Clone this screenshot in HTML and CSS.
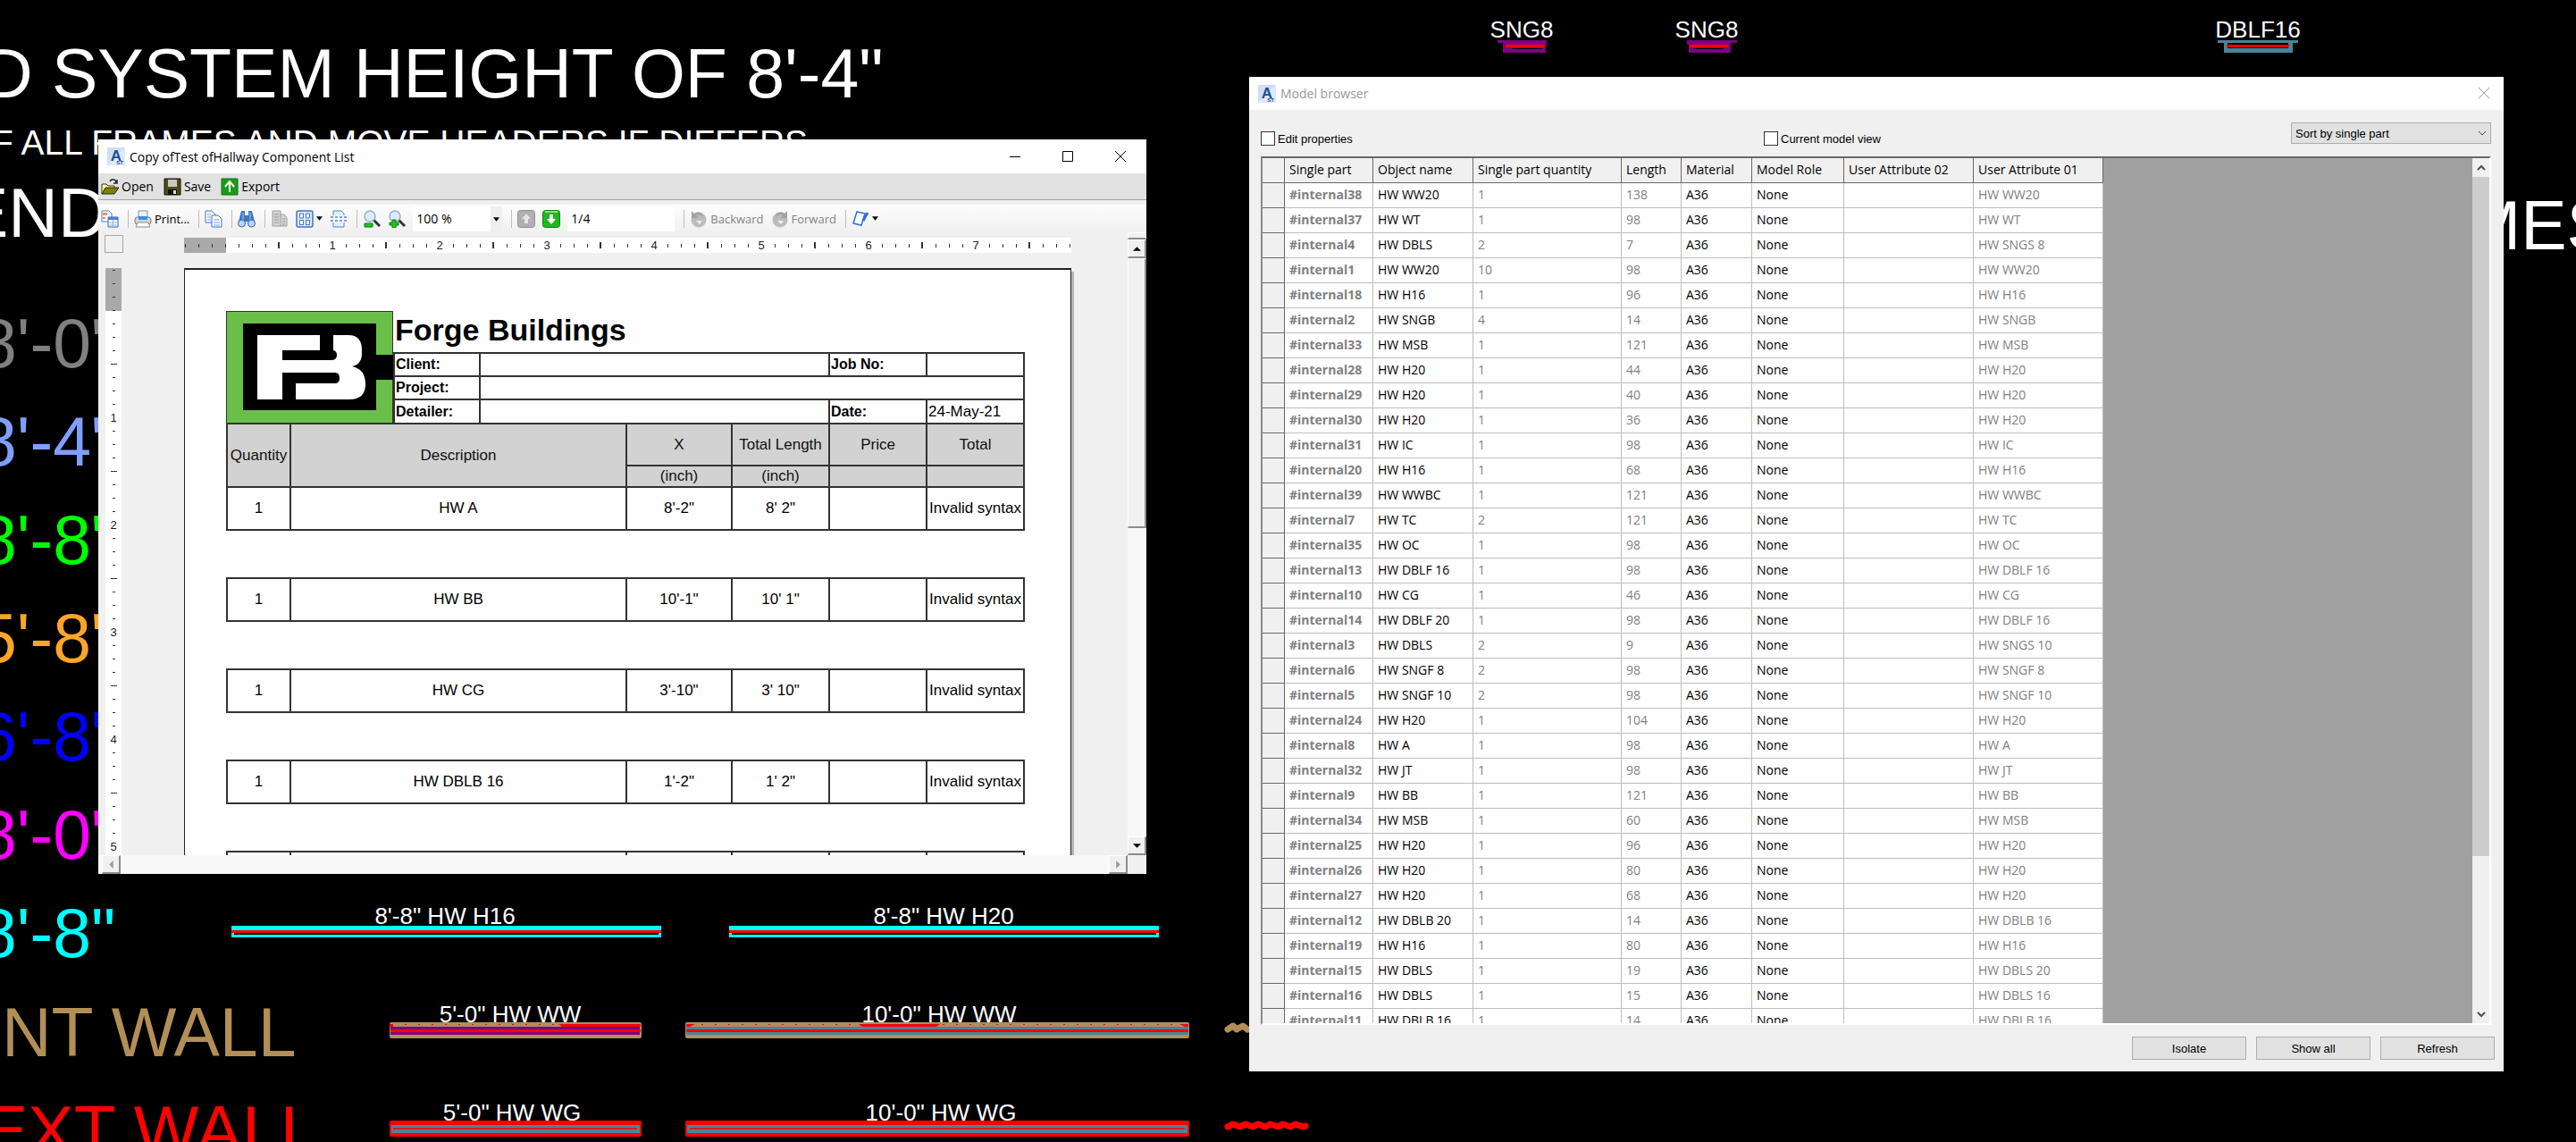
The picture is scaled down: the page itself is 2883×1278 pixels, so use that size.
FILE: index.html
```html
<!DOCTYPE html>
<html lang="en">
<head>
  <meta charset="UTF-8">
  <title>Hallway Component List</title>
  <link rel="stylesheet" href="styles.css">
</head>
<body>
  <!-- CAD drawing behind the windows -->
  <svg class="drawing" aria-label="Drawing">
    <g class="note">
      <text x="-19" y="109" fill="#fff">D SYSTEM HEIGHT OF 8'-4"</text>
      <text x="-42" y="265" fill="#fff">ENDS</text>
      <text x="2757" y="279" fill="#fff">MES</text>
      <text x="-24" y="411" fill="#808080">8'-0"</text>
      <text x="-24" y="521" fill="#7f9fff">8'-4"</text>
      <text x="-24" y="631" fill="#0f0">8'-8"</text>
      <text x="-24" y="741" fill="#ffa528">5'-8"</text>
      <text x="-24" y="851" fill="#00f">6'-8"</text>
      <text x="-24" y="961" fill="#f0f">8'-0"</text>
      <text x="-24" y="1071" fill="#0ff">8'-8"</text>
      <text x="2" y="1182" fill="#b18f57">NT WALL</text>
      <text x="-20" y="1292" fill="#f00">EXT WALL</text>
    </g>
    <text class="subnote" x="-9" y="173">F ALL FRAMES AND MOVE HEADERS IF DIFFERS</text>

    <g class="tag">
      <text x="1703" y="42">SNG8</text>
      <text x="1910" y="42">SNG8</text>
      <text x="2527" y="42">DBLF16</text>
      <text x="498" y="1034">8'-8" HW H16</text>
      <text x="1056" y="1034">8'-8" HW H20</text>
      <text x="571" y="1144">5'-0" HW WW</text>
      <text x="1051" y="1144">10'-0" HW WW</text>
      <text x="573" y="1254">5'-0" HW WG</text>
      <text x="1053" y="1254">10'-0" HW WG</text>
    </g>

    <!-- single headers -->
    <g fill="#800080">
      <path d="M1676 45h55v5h-1v9h-48v-11h-6z"/>
      <path d="M1888 45h56v3h-7v10h-1v1h-46v-9h-2z"/>
    </g>
    <path d="M1692 54h34v1h-34zM1895 54h34v1h-34z" fill="#000"/>
    <path d="M1685 50h44v3h-44zM1891 50h43v3h-43z" fill="#f00"/>
    <path d="M2482 45h90v3h-6v11h-77v-11h-7z" fill="#4a8499"/>
    <path d="M2493 48h68v6h-68z" fill="#000"/>
    <path d="M2492 50h70v3h-70z" fill="#f00"/>

    <!-- headers H16 and H20 -->
    <g id="header">
      <rect x="259" y="1036" width="481" height="13" fill="#0ff"/>
      <rect x="262" y="1041" width="475" height="5" fill="#000"/>
      <rect x="259" y="1041" width="481" height="3" fill="#f00"/>
    </g>
    <use href="#header" x="557"/>

    <!-- window wall frames -->
    <rect x="436" y="1144" width="282" height="18" rx="2" fill="#b18f57"/>
    <path d="M438 1146.500h278" stroke="#f00" stroke-dasharray="2 13"/>
    <path d="M625 1146h92v3h-88zM436 1146h4v3h-4z" fill="#f00"/>
    <rect x="437" y="1149" width="279" height="9" fill="#800080"/>
    <rect x="437" y="1152" width="280" height="3" fill="#f00"/>
    <rect x="767" y="1144" width="564" height="18" rx="2" fill="#b18f57"/>
    <path d="M770 1146.500h558" stroke="#f00" stroke-dasharray="2 13"/>
    <path d="M961 1146h91l-4 3h-83zM768 1146h10l-6 3h-4zM1320 1146h10v3h-4z" fill="#f00"/>
    <rect x="768" y="1149" width="562" height="9" fill="#4a8499"/>
    <rect x="768" y="1152" width="562" height="3" fill="#f00"/>
    <path d="M1374 1152l6-4 4 4 7-4 5 4" class="weld" stroke="#b18f57"/>

    <!-- window glazed frames -->
    <rect x="436" y="1254" width="282" height="18" rx="2" fill="#f00"/>
    <rect x="438" y="1259" width="278" height="9" fill="#4a8499"/>
    <rect x="440" y="1262" width="273" height="2" fill="#d81e24"/>
    <rect x="767" y="1254" width="564" height="18" rx="2" fill="#f00"/>
    <rect x="769" y="1259" width="560" height="9" fill="#4a8499"/>
    <rect x="772" y="1262" width="554" height="2" fill="#d81e24"/>
    <path d="M1374 1261l6-3 8 3 6-3 8 3 6-3 8 3 6-3 8 3 6-3 8 3 6-3 8 3 3-1" class="weld" stroke="#f00"/>
  </svg>

  <svg class="symbols">
    <symbol id="app" viewBox="0 0 20 20">
      <rect width="20" height="20" fill="#cfdff3"/>
      <path d="M0 20L20 0v20z" fill="#dfe9f7"/>
      <text x="10" y="15" text-anchor="middle" class="app-a">A</text>
      <text x="14" y="19" text-anchor="middle" class="app-st">ST</text>
    </symbol>
  </svg>

  <!-- report window -->
  <section class="window report-window">
    <header class="title-bar">
      <svg class="icon"><use href="#app"/></svg>
      <h1>Copy ofTest ofHallway Component List</h1>
      <button type="button" class="win-btn" aria-label="Minimize"><svg viewBox="0 0 12 12"><path d="M0 6.500h12"/></svg></button>
      <button type="button" class="win-btn" aria-label="Maximize"><svg viewBox="0 0 12 12"><path d="M.5.5h11v11H.5z"/></svg></button>
      <button type="button" class="win-btn" aria-label="Close"><svg viewBox="0 0 12 12"><path d="M0 0l12 12M12 0L0 12"/></svg></button>
    </header>

    <nav class="menu-bar">
      <button type="button"><svg class="icon" viewBox="0 0 20 20"><path d="M1 18V7h5l2 2h7v3" fill="#ffff80" stroke="#333"/><path d="M1 18l4-7h15l-5 7z" fill="#808000" stroke="#222"/><path d="M10 4c2-3 6-3 7 1m1-3v4h-4" fill="none" stroke="#222" stroke-width="1.500"/></svg>Open</button>
      <button type="button"><svg class="icon" viewBox="0 0 20 20"><path d="M1 1h18v18H1z" fill="#4d4d10" stroke="#111"/><path d="M5 2h10v8H5z" fill="#c8c8c8"/><path d="M5 13h10v6H5z" fill="#111"/><path d="M11 14h3v4h-3z" fill="#ddd"/></svg>Save</button>
      <button type="button"><svg class="icon" viewBox="0 0 20 20"><path d="M1 1h18v18H1z" fill="#1c9a1c" stroke="#0c6e12"/><path d="M10 16V5M5 10l5-6 5 6" fill="none" stroke="#fff" stroke-width="2"/></svg>Export</button>
    </nav>

    <div class="tool-bar">
      <div class="group">
        <button type="button" aria-label="Layout"><svg class="icon" viewBox="0 0 20 20"><path d="M1 1h8l3 3v9H1z" fill="#fff" stroke="#4a7ed0"/><path d="M2 3h5v3H2zM2 8h3v2H2z" fill="#f08a5a"/><path d="M8 8h11v11H8z" fill="#fff" stroke="#2f66c0"/><path d="M8 8h11v3H8z" fill="#4b7fd6"/><path d="M13.500 11v8M9 14h9M9 17h9" stroke="#8fb0e4"/></svg></button>
      </div>
      <div class="group">
        <button type="button"><svg class="icon" viewBox="0 0 20 20"><path d="M5 1h10v9H5z" fill="#eaf3fc" stroke="#7d93ad"/><rect x="1" y="8" width="18" height="8" rx="3" fill="#d4d8dd" stroke="#777"/><path d="M5 7h10v4H5z" fill="#3d8ee8"/><path d="M4 14h12l2 5H2z" fill="#fff" stroke="#888"/></svg>Print...</button>
      </div>
      <div class="group">
        <button type="button" aria-label="Copy"><svg class="icon" viewBox="0 0 20 20"><g fill="#fff" stroke="#3d74cf"><path d="M1 1h7l4 4v9H1z"/><path d="M8 6h7l4 4v9H8z"/></g><path d="M3 5h4M3 8h4M3 11h4M10 11h6M10 14h7M10 17h7" stroke="#6f9ae0"/></svg></button>
      </div>
      <div class="group">
        <button type="button" aria-label="Find"><svg class="icon" viewBox="0 0 20 20"><path d="M4 1h4v5h4V1h4l3 12H1z" fill="#3f76c4"/><path d="M6 3v9M14 3v9" stroke="#a9c8f4"/><circle cx="4.500" cy="15" r="4" fill="#b9d4f8" stroke="#2f66b8"/><circle cx="15.500" cy="15" r="4" fill="#b9d4f8" stroke="#2f66b8"/></svg></button>
      </div>
      <div class="group">
        <button type="button" disabled aria-label="Single page"><svg class="icon" viewBox="0 0 20 20"><path d="M2 1h9v17H2zM11 5h4l3 4v9h-7" fill="#d2d2d2" stroke="#a0a0a0"/><path d="M4 5h5M4 8h5M4 11h5M4 14h5M13 10h3M13 13h3M13 16h3" stroke="#999"/></svg></button>
        <button type="button" class="drop" aria-label="Multiple pages"><svg class="icon" viewBox="0 0 20 20"><rect x="1" y="1" width="18" height="18" rx="2" fill="#dce8fb" stroke="#3d74cf" stroke-width="1.500"/><path d="M4.500 4h4v5h-4zM11.500 4h4v5h-4zM4.500 11.500h4v5h-4zM11.500 11.500h4v5h-4z" fill="#fff" stroke="#3d74cf"/></svg><svg class="caret" viewBox="0 0 6 6"><path d="M0 1h6L3 5z"/></svg></button>
        <button type="button" aria-label="Continuous"><svg class="icon" viewBox="0 0 20 20"><g fill="#e4eefc" stroke="#4f83d8"><path d="M4 6V1h9l3 3v2"/><path d="M4 14v5h12v-5"/><path d="M1 8h18M1 12h18" stroke-width="1.500" stroke-dasharray="3 2"/></g></svg></button>
      </div>
      <div class="group">
        <button type="button" aria-label="Zoom out"><svg class="icon" viewBox="0 0 20 20"><path d="M12 11l7 7" stroke="#333" stroke-width="3"/><circle cx="8" cy="7" r="6" fill="#d9ecfb" stroke="#9aafc2" stroke-width="1.500"/><path d="M2 15h9v4H2z" fill="#21c321" stroke="#0a7a0a"/></svg></button>
        <button type="button" aria-label="Zoom in"><svg class="icon" viewBox="0 0 20 20"><path d="M12 11l7 7" stroke="#333" stroke-width="3"/><circle cx="8" cy="7" r="6" fill="#d9ecfb" stroke="#9aafc2" stroke-width="1.500"/><path d="M5 11h4v3h3v3H9v3H5v-3H2v-3h3z" fill="#21c321" stroke="#0a7a0a"/></svg></button>
        <div class="zoom-box">
          <select aria-label="Zoom"><option>100 %</option></select>
          <svg class="caret" viewBox="0 0 6 6"><path d="M0 1h6L3 5z"/></svg>
        </div>
      </div>
      <div class="group">
        <button type="button" disabled aria-label="Previous page"><svg class="icon" viewBox="0 0 20 20"><rect x=".5" y=".5" width="19" height="19" rx="3" fill="#b0b0b0" stroke="#909090"/><path d="M10 4l5 6h-3v5H8v-5H5z" fill="#e4e4e4"/></svg></button>
        <button type="button" aria-label="Next page"><svg class="icon" viewBox="0 0 20 20"><rect x=".5" y=".5" width="19" height="19" rx="3" fill="#1fb81f" stroke="#128012"/><path d="M3 2h14" stroke="#7be87b" stroke-width="2"/><path d="M10 16l5-6h-3V5H8v5H5z" fill="#fff"/></svg></button>
        <input class="page-box" type="text" value="1/4" aria-label="Page">
      </div>
      <div class="group">
        <button type="button" disabled><svg class="icon" viewBox="0 0 20 20"><circle cx="10" cy="11" r="8.500" fill="#bcbcbc"/><path d="M2 1v8h8L7 6c3-2 7 0 8 3 0-6-6-8-10-5z" fill="#a2a2a2"/><path d="M7 12h7l-3 4z" fill="#eee"/></svg>Backward</button>
        <button type="button" disabled><svg class="icon" viewBox="0 0 20 20"><circle cx="10" cy="11" r="8.500" fill="#bcbcbc"/><path d="M18 1v8h-8l3-3c-3-2-7 0-8 3 0-6 6-8 10-5z" fill="#a2a2a2"/><path d="M7 12h7l-3 4z" fill="#eee"/></svg>Forward</button>
      </div>
      <div class="group">
        <button type="button" class="drop" aria-label="Edit page"><svg class="icon" viewBox="0 0 20 20"><path d="M6 2l9 2-4 13-9-2z" fill="#fff" stroke="#2f6fd6" stroke-width="1.500"/><path d="M18 3l-5 9" stroke="#2f6fd6" stroke-width="3"/></svg><svg class="caret" viewBox="0 0 6 6"><path d="M0 1h6L3 5z"/></svg></button>
      </div>
    </div>

    <div class="preview">
      <div class="corner"><span></span></div>
      <ol class="ruler ruler-x"><li>1</li><li>2</li><li>3</li><li>4</li><li>5</li><li>6</li><li>7</li></ol>
      <ol class="ruler ruler-y"><li>1</li><li>2</li><li>3</li><li>4</li><li>5</li></ol>

      <div class="paper-area">
        <article class="paper">
          <div class="letterhead">
            <svg class="logo" viewBox="0 0 187 125" role="img" aria-label="Forge Buildings">
              <path d="M0 0h187v125H0z" fill="#6abf4b"/>
              <path d="M19 14h149v35h19v28h-19v34H19z" fill="#000"/>
              <path d="M35 27h70v17H63v11h55q6 0 6-6 0-4-4-5V27h17q15 0 15 17v3q0 13-11 15 15 3 15 20 0 17-18 17H78V81h44q5 0 5-6t-5-6H63v30H35z" fill="#fff"/>
              <path d="M.5.5h186v48M186.500 77v48M.5 0v125" fill="none" stroke="#333"/>
            </svg>
            <div class="job">
              <h2>Forge Buildings</h2>
              <table class="job-table">
                <colgroup><col class="w-label"><col><col class="w-num"><col class="w-num"></colgroup>
                <tr><th>Client:</th><td></td><th>Job No:</th><td></td></tr>
                <tr><th>Project:</th><td colspan="3"></td></tr>
                <tr><th>Detailer:</th><td></td><th>Date:</th><td>24-May-21</td></tr>
              </table>
            </div>
          </div>
          <table class="parts">
            <colgroup><col class="w-qty"><col><col class="w-x"><col class="w-num"><col class="w-num"><col class="w-num"></colgroup>
            <thead>
              <tr class="head-top"><th rowspan="2">Quantity</th><th rowspan="2">Description</th><th>X</th><th>Total Length</th><th>Price</th><th>Total</th></tr>
              <tr class="head-unit"><th>(inch)</th><th>(inch)</th><th></th><th></th></tr>
            </thead>
            <tbody>
              <tr><td>1</td><td>HW A</td><td>8'-2"</td><td>8' 2"</td><td></td><td>Invalid syntax</td></tr>
              <tr class="space"><td colspan="6"></td></tr>
              <tr><td>1</td><td>HW BB</td><td>10'-1"</td><td>10' 1"</td><td></td><td>Invalid syntax</td></tr>
              <tr class="space"><td colspan="6"></td></tr>
              <tr><td>1</td><td>HW CG</td><td>3'-10"</td><td>3' 10"</td><td></td><td>Invalid syntax</td></tr>
              <tr class="space"><td colspan="6"></td></tr>
              <tr><td>1</td><td>HW DBLB 16</td><td>1'-2"</td><td>1' 2"</td><td></td><td>Invalid syntax</td></tr>
              <tr class="space"><td colspan="6"></td></tr>
              <tr><td></td><td></td><td></td><td></td><td></td><td></td></tr>
            </tbody>
          </table>
        </article>
      </div>

      <div class="scroll-y">
        <div class="splitter"></div>
        <button type="button" aria-label="Scroll up"><svg viewBox="0 0 8 8"><path d="M0 6h8L4 2z"/></svg></button>
        <div class="thumb"></div>
        <button type="button" class="last" aria-label="Scroll down"><svg viewBox="0 0 8 8"><path d="M0 2h8L4 6z"/></svg></button>
      </div>
      <div class="scroll-x">
        <button type="button" disabled aria-label="Scroll left"><svg viewBox="0 0 8 8"><path d="M6 0v8L2 4z"/></svg></button>
        <button type="button" disabled aria-label="Scroll right"><svg viewBox="0 0 8 8"><path d="M2 0v8l4-4z"/></svg></button>
      </div>
    </div>
  </section>

  <!-- model browser window -->
  <section class="window browser-window">
    <header class="title-bar inactive">
      <svg class="icon"><use href="#app"/></svg>
      <h1>Model browser</h1>
      <button type="button" class="win-btn" aria-label="Close"><svg viewBox="0 0 12 12"><path d="M0 0l12 12M12 0L0 12"/></svg></button>
    </header>
    <div class="options">
      <label><input type="checkbox">Edit properties</label>
      <label><input type="checkbox">Current model view</label>
      <div class="sort-box">
        <select aria-label="Sort"><option>Sort by single part</option></select>
        <svg viewBox="0 0 10 6"><path d="M1 1l4 4 4-4"/></svg>
      </div>
    </div>
    <div class="grid-box">
      <div class="grid-view">
        <table class="model-grid">
          <colgroup><col class="c-mark"><col class="c-part"><col class="c-name"><col class="c-qty"><col class="c-len"><col class="c-mat"><col class="c-role"><col class="c-attr"><col class="c-attr"></colgroup>
          <thead>
            <tr><th></th><th>Single part</th><th>Object name</th><th>Single part quantity</th><th>Length</th><th>Material</th><th>Model Role</th><th>User Attribute 02</th><th>User Attribute 01</th></tr>
          </thead>
          <tbody id="modelRows"></tbody>
        </table>
      </div>
      <div class="grid-scroll">
        <button type="button" aria-label="Scroll up"><svg viewBox="0 0 10 8"><path d="M1 6l4-4 4 4"/></svg></button>
        <div class="thumb"></div>
        <button type="button" aria-label="Scroll down"><svg viewBox="0 0 10 8"><path d="M1 2l4 4 4-4"/></svg></button>
      </div>
    </div>
    <footer class="actions">
      <button type="button">Isolate</button>
      <button type="button">Show all</button>
      <button type="button">Refresh</button>
    </footer>
  </section>

  <script>
    // part no., object name, quantity, length, user attribute 01
    const parts = [
      [38, 'HW WW20', 1, 138, 'HW WW20'],
      [37, 'HW WT', 1, 98, 'HW WT'],
      [4, 'HW DBLS', 2, 7, 'HW SNGS 8'],
      [1, 'HW WW20', 10, 98, 'HW WW20'],
      [18, 'HW H16', 1, 96, 'HW H16'],
      [2, 'HW SNGB', 4, 14, 'HW SNGB'],
      [33, 'HW MSB', 1, 121, 'HW MSB'],
      [28, 'HW H20', 1, 44, 'HW H20'],
      [29, 'HW H20', 1, 40, 'HW H20'],
      [30, 'HW H20', 1, 36, 'HW H20'],
      [31, 'HW IC', 1, 98, 'HW IC'],
      [20, 'HW H16', 1, 68, 'HW H16'],
      [39, 'HW WWBC', 1, 121, 'HW WWBC'],
      [7, 'HW TC', 2, 121, 'HW TC'],
      [35, 'HW OC', 1, 98, 'HW OC'],
      [13, 'HW DBLF 16', 1, 98, 'HW DBLF 16'],
      [10, 'HW CG', 1, 46, 'HW CG'],
      [14, 'HW DBLF 20', 1, 98, 'HW DBLF 16'],
      [3, 'HW DBLS', 2, 9, 'HW SNGS 10'],
      [6, 'HW SNGF 8', 2, 98, 'HW SNGF 8'],
      [5, 'HW SNGF 10', 2, 98, 'HW SNGF 10'],
      [24, 'HW H20', 1, 104, 'HW H20'],
      [8, 'HW A', 1, 98, 'HW A'],
      [32, 'HW JT', 1, 98, 'HW JT'],
      [9, 'HW BB', 1, 121, 'HW BB'],
      [34, 'HW MSB', 1, 60, 'HW MSB'],
      [25, 'HW H20', 1, 96, 'HW H20'],
      [26, 'HW H20', 1, 80, 'HW H20'],
      [27, 'HW H20', 1, 68, 'HW H20'],
      [12, 'HW DBLB 20', 1, 14, 'HW DBLB 16'],
      [19, 'HW H16', 1, 80, 'HW H16'],
      [15, 'HW DBLS', 1, 19, 'HW DBLS 20'],
      [16, 'HW DBLS', 1, 15, 'HW DBLS 16'],
      [11, 'HW DBLB 16', 1, 14, 'HW DBLB 16']
    ];

    const modelRows = document.getElementById('modelRows');
    parts.forEach(function(p) {
      const cells = ['', '#internal' + p[0], p[1], p[2], p[3], 'A36', 'None', '', p[4]];
      const row = modelRows.insertRow();
      cells.forEach(function(text) {
        row.insertCell().textContent = text;
      });
    });
  </script>
</body>
</html>
```

FILE: styles.css
```css
* {
  box-sizing: border-box;
}
body {
  margin: 0;
  height: 100vh;
  position: relative;
  overflow: hidden;
  background: #000;
  font-family: "Open Sans", "Noto Sans", sans-serif;
  font-size: 14px;
  color: #000;
}
button,
input,
select {
  font: inherit;
  color: inherit;
  margin: 0;
  padding: 0;
}
button {
  border: 0;
  background: none;
}
h1,
h2,
ol {
  margin: 0;
  padding: 0;
  font-weight: normal;
}

/* drawing */
.drawing {
  position: absolute;
  inset: 0;
  width: 100%;
  height: 100%;
  font-family: "Liberation Sans", Arial, sans-serif;
}
.note {
  font-size: 77px;
}
.subnote {
  font-size: 39px;
  fill: #fff;
}
.tag {
  font-size: 26px;
  fill: #fff;
  text-anchor: middle;
}
.weld {
  fill: none;
  stroke-width: 7px;
  stroke-linecap: round;
  stroke-linejoin: round;
}
.symbols {
  position: absolute;
  width: 0;
  height: 0;
}
.app-a {
  font: bold 17px "Liberation Sans", sans-serif;
  fill: #1b4f93;
}
.app-st {
  font: bold 6px "Liberation Sans", sans-serif;
  fill: #1b4f93;
}

/* windows */
.window {
  position: absolute;
  display: flex;
  flex-direction: column;
  background: #f0f0f0;
}
.report-window {
  left: 110px;
  top: 156px;
  right: 1600px;
  bottom: 300px;
}
.browser-window {
  left: 1398px;
  top: 86px;
  right: 81px;
  bottom: 79px;
}
.icon {
  width: 20px;
  height: 20px;
  flex: none;
}
.title-bar {
  display: flex;
  align-items: center;
  height: 38px;
  flex: none;
  padding-left: 10px;
  background: #fff;
}
.title-bar h1 {
  flex: 1;
  margin-left: 5px;
  font-size: 14px;
}
.title-bar.inactive {
  height: 37px;
  color: #999;
}
.win-btn {
  width: 59px;
  height: 36px;
}
.win-btn svg {
  width: 12px;
  height: 12px;
  fill: none;
  stroke: currentColor;
}
.inactive .win-btn {
  width: 44px;
}

/* report window bars */
.menu-bar {
  display: flex;
  align-items: center;
  gap: 11px;
  height: 30px;
  flex: none;
  padding-left: 3px;
  background: #e1e1e1;
  border-bottom: 1px solid #a5a5a5;
}
.menu-bar button,
.tool-bar button {
  display: flex;
  align-items: center;
  gap: 3px;
}
.tool-bar {
  display: flex;
  align-items: center;
  height: 31px;
  flex: none;
  margin-top: 5px;
  padding-left: 3px;
  background: linear-gradient(#fdfdfd, #f0f0f0);
  font-size: 13px;
}
.tool-bar button:disabled {
  color: #838383;
}
.group {
  display: flex;
  align-items: center;
  gap: 8px;
  height: 20px;
  padding-right: 10px;
}
.group + .group {
  padding-left: 6px;
  border-left: 1px solid #bdbdbd;
}
.caret {
  width: 7px;
  height: 7px;
}
.zoom-box {
  position: relative;
  width: 100px;
}
.zoom-box select,
.page-box {
  display: block;
  width: 100%;
  height: 28px;
  padding-left: 4px;
  appearance: none;
  border: 0;
  border-radius: 0;
  background: #fff;
  font-size: 14px;
}
.zoom-box select {
  border-right: 13px solid #f0f0f0;
}
.zoom-box .caret {
  position: absolute;
  right: 3px;
  top: 11px;
}
.page-box {
  width: 120px;
}

/* preview */
.preview {
  flex: 1;
  min-height: 0;
  display: grid;
  grid-template-columns: 34px 1fr 21px;
  grid-template-rows: 40px 1fr 21px;
}
.corner {
  padding: 3px 0 0 7px;
}
.corner span {
  display: block;
  width: 21px;
  height: 20px;
  border: 1px solid #a8a8a8;
}
.ruler {
  list-style: none;
  position: relative;
  display: flex;
  overflow: hidden;
  font-family: "Liberation Sans", sans-serif;
  font-size: 13px;
  line-height: 16px;
  color: #222;
}
.ruler::before {
  content: "";
  position: absolute;
  inset: 0;
}
.ruler li {
  position: relative;
  flex: none;
  display: flex;
  justify-content: center;
  align-items: center;
}
.ruler-x {
  height: 17px;
  margin: 6px 63px 0 62px;
  padding-left: 106px;
  background: linear-gradient(#a9a9a9, #a9a9a9) 0 0 / 47px 17px no-repeat #fff;
}
.ruler-x::before {
  background:
    repeating-linear-gradient(90deg, transparent 0 105px, #333 105px 107px, transparent 107px 120px) 0 5px / 100% 7px no-repeat,
    repeating-linear-gradient(90deg, #333 0 1px, transparent 1px 15px) 1px 7px / 100% 4px no-repeat;
}
.ruler-x li {
  width: 120px;
  background: linear-gradient(#fff, #fff) center / 9px 100% no-repeat;
}
.ruler-y {
  grid-column: 1;
  grid-row: 2;
  flex-direction: column;
  width: 18px;
  margin-left: 8px;
  padding-top: 108px;
  background: linear-gradient(#a9a9a9, #a9a9a9) 0 0 / 18px 48px no-repeat #fff;
}
.ruler-y::before {
  background:
    repeating-linear-gradient(transparent 0 107px, #333 107px 108px, transparent 108px 120px) 6px 0 / 7px 100% no-repeat,
    repeating-linear-gradient(#333 0 1px, transparent 1px 15px) 8px 2px / 3px 100% no-repeat;
}
.ruler-y li {
  height: 120px;
  background: linear-gradient(#fff, #fff) center / 100% 10px no-repeat;
}
.paper-area {
  grid-column: 2;
  grid-row: 2;
  overflow: hidden;
  min-height: 0;
  padding: 0 63px 0 62px;
}
.paper {
  min-height: 1300px;
  padding: 46px 51px 0 46px;
  background: #fff;
  border: 1px solid #222;
  border-top-width: 2px;
  box-shadow: 3px 4px #b4b4b4;
  font-family: "Liberation Sans", Arial, sans-serif;
  font-size: 17px;
}
.letterhead {
  display: flex;
  align-items: flex-end;
}
.logo {
  width: 187px;
  height: 125px;
  flex: none;
}
.job {
  flex: 1;
}
.job h2 {
  padding: 0 0 4px 2px;
  font-size: 34px;
  line-height: 42px;
  font-weight: bold;
}
.job-table,
.parts {
  width: 100%;
  table-layout: fixed;
  border-collapse: collapse;
}
.job-table th,
.job-table td,
.parts th,
.parts td {
  padding: 0;
  border: 2px solid #333;
  white-space: nowrap;
}
.job-table tr {
  height: 26px;
}
.job-table th {
  font-size: 16px;
}
.job-table th,
.job-table td {
  padding-left: 1px;
  text-align: left;
  line-height: 20px;
}
.job-table tr:last-child > * {
  border-bottom: 0;
}
.parts th {
  background: #d2d2d2;
  color: #111;
  font-weight: normal;
}
.parts tr {
  height: 48px;
  text-align: center;
}
.parts .head-top {
  height: 47px;
}
.parts .head-unit {
  height: 24px;
}
.parts .space {
  height: 54px;
}
.parts .space td {
  border-left: 0;
  border-right: 0;
}
.w-label {
  width: 96px;
}
.w-num {
  width: 109px;
}
.w-qty {
  width: 71px;
}
.w-x {
  width: 118px;
}

/* old style scroll bars */
.scroll-y {
  grid-column: 3;
  grid-row: 1 / 3;
  display: flex;
  flex-direction: column;
  background: #f8f8f8;
}
.splitter {
  height: 8px;
  border: 1px solid #fff;
  border-bottom: 2px solid #8c8c8c;
  background: #f0f0f0;
}
.scroll-y button,
.scroll-x button,
.scroll-y .thumb {
  width: 21px;
  height: 21px;
  background: #f0f0f0;
  border: 1px solid #fff;
  border-right: 2px solid #8c8c8c;
  border-bottom: 2px solid #8c8c8c;
}
.scroll-y .thumb {
  height: 302px;
}
.scroll-y svg,
.scroll-x svg {
  display: block;
  width: 9px;
  height: 9px;
  margin: auto;
}
.scroll-y .last {
  margin-top: auto;
}
.scroll-x {
  grid-column: 1 / 3;
  grid-row: 3;
  display: flex;
  justify-content: space-between;
  padding-left: 4px;
  background: #f8f8f8;
  fill: #999;
}

/* model browser */
.options {
  display: flex;
  height: 52px;
  flex: none;
  padding: 14px 14px 0 13px;
  font-family: "Liberation Sans", Arial, sans-serif;
  font-size: 13px;
}
.options label {
  display: flex;
  align-items: center;
  gap: 3px;
  width: 563px;
  height: 36px;
}
.options input {
  appearance: none;
  width: 16px;
  height: 16px;
  background: #fff;
  border: 1px solid #333;
}
.sort-box {
  position: relative;
  width: 224px;
  height: 24px;
  margin-left: auto;
}
.sort-box select {
  width: 100%;
  height: 100%;
  padding-left: 4px;
  appearance: none;
  background: #e1e1e1;
  border: 1px solid #adadad;
  border-radius: 0;
}
.sort-box svg {
  position: absolute;
  right: 5px;
  top: 9px;
  width: 10px;
  height: 6px;
  fill: none;
  stroke: #444;
}
.grid-box {
  flex: 1;
  min-height: 0;
  display: flex;
  margin: 0 14px 0 13px;
  border: 2px solid #fff;
  border-top-color: #696969;
  border-left-color: #8a8a8a;
  background: #a0a0a0;
}
.grid-view {
  flex: 1;
  overflow: hidden;
}
.model-grid {
  table-layout: fixed;
  border-collapse: separate;
  border-spacing: 0;
  width: 941px;
}
.model-grid th,
.model-grid td {
  height: 28px;
  padding: 0 0 1px 5px;
  text-align: left;
  line-height: 20px;
  white-space: nowrap;
  background: #fff;
  border-right: 1px solid #bdbdbd;
  border-bottom: 1px solid #bdbdbd;
}
.model-grid th {
  font-weight: normal;
  background: #f0f0f0;
  border-color: #696969;
}
.model-grid td:first-child {
  background: #f0f0f0;
  border-color: #696969;
}
.model-grid td:nth-child(2) {
  font-weight: bold;
}
.model-grid td:nth-child(2),
.model-grid td:nth-child(4),
.model-grid td:nth-child(5),
.model-grid td:nth-child(9) {
  color: #808080;
}
.c-mark {
  width: 25px;
}
.c-part {
  width: 99px;
}
.c-name {
  width: 112px;
}
.c-qty {
  width: 166px;
}
.c-len {
  width: 67px;
}
.c-mat {
  width: 79px;
}
.c-role {
  width: 103px;
}
.c-attr {
  width: 145px;
}
.grid-scroll {
  display: flex;
  flex-direction: column;
  justify-content: space-between;
  width: 19px;
  background: #f0f0f0;
}
.grid-scroll button {
  height: 21px;
}
.grid-scroll svg {
  display: block;
  width: 10px;
  height: 8px;
  margin: auto;
  fill: none;
  stroke: #505050;
  stroke-width: 2px;
}
.grid-scroll .thumb {
  height: 760px;
  margin-bottom: auto;
  background: #cdcdcd;
}
.actions {
  display: flex;
  justify-content: flex-end;
  gap: 11px;
  flex: none;
  height: 52px;
  padding: 13px 10px 0;
  font-family: "Liberation Sans", Arial, sans-serif;
  font-size: 13px;
}
.actions button {
  width: 128px;
  height: 26px;
  background: #e1e1e1;
  border: 1px solid #adadad;
}
```
